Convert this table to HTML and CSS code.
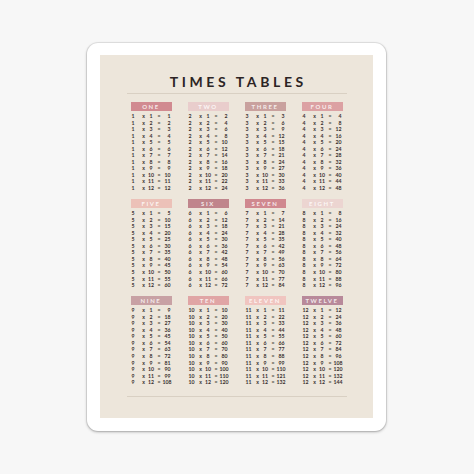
FILE: index.html
```html
<!DOCTYPE html>
<html>
<head>
<meta charset="utf-8">
<link rel="stylesheet" href="styles.css">
</head>
<body>
<div class="sticker">
  <div class="poster">
    <h1 class="title">TIMES TABLES</h1>
    <div class="rule"></div>
    <div class="grid" id="grid"></div>
    <div class="rule bottom"></div>
  </div>
</div>
<script src="script.js"></script>
</body>
</html>
```
FILE: styles.css
```css
html, body {
  margin: 0;
  padding: 0;
  background: #f7f7f7;
}
body {
  width: 474px;
  height: 474px;
  overflow: hidden;
  font-family: "Lato", "Inter", sans-serif;
}
.sticker {
  margin: 43px 0 0 87px;
  width: 299px;
  height: 388px;
  box-sizing: border-box;
  padding: 12px 13px 13px 13px;
  background: #ffffff;
  border-radius: 11px;
  box-shadow: 0 0 0 1px rgba(0,0,0,0.07), 0 1px 3px rgba(0,0,0,0.3);
}
.poster {
  width: 273px;
  height: 363px;
  background: #ede6db;
  display: flex;
  flex-direction: column;
  align-items: center;
}
.title {
  margin: 20px 0 0 0;
  font-size: 14px;
  line-height: 14px;
  font-weight: 700;
  letter-spacing: 3.6px;
  padding-left: 3.6px;
  color: #2c2424;
}
.rule {
  width: 220px;
  height: 1px;
  background: #d9d0c3;
  margin-top: 4px;
}
.rule.bottom {
  margin-top: 10px;
}
.grid {
  margin-top: 8px;
  display: grid;
  grid-template-columns: repeat(4, 41px);
  column-gap: 16px;
  row-gap: 7.5px;
}
.table {
  display: flex;
  flex-direction: column;
}
.head {
  height: 9px;
  line-height: 9px;
  font-size: 6px;
  font-weight: 700;
  letter-spacing: 1.6px;
  text-align: center;
  color: rgba(255,255,255,0.82);
  margin-bottom: 2px;
}
.row {
  display: grid;
  grid-template-columns: 9px 6px 9px 7px 1fr;
  height: 6.55px;
  line-height: 6.55px;
  font-size: 5.2px;
  font-weight: 700;
  color: #3a3030;
  padding: 0 1px;
}
.row span:nth-child(1) { text-align: left; }
.row span:nth-child(2) { text-align: center; }
.row span:nth-child(3) { text-align: center; }
.row span:nth-child(4) { text-align: center; }
.row span:nth-child(5) { text-align: right; }
.c1 { background: #d18a90; }
.c2 { background: #e9cdcc; }
.c3 { background: #c9a19e; }
.c4 { background: #dca1a3; }
.c5 { background: #ecc1b8; }
.c6 { background: #c0858c; }
.c7 { background: #d0888f; }
.c8 { background: #ecd5d1; }
.c9 { background: #c8a1a4; }
.c10 { background: #e0a5a5; }
.c11 { background: #f0c5c0; }
.c12 { background: #b8899a; }
```
FILE: script.js
```js
var names = ["ONE","TWO","THREE","FOUR","FIVE","SIX","SEVEN","EIGHT","NINE","TEN","ELEVEN","TWELVE"];
var grid = document.getElementById("grid");
for (var n = 1; n <= 12; n++) {
  var t = document.createElement("div");
  t.className = "table";
  var h = document.createElement("div");
  h.className = "head c" + n;
  h.textContent = names[n - 1];
  t.appendChild(h);
  for (var i = 1; i <= 12; i++) {
    var r = document.createElement("div");
    r.className = "row";
    var parts = [n, "x", i, "=", n * i];
    for (var k = 0; k < parts.length; k++) {
      var s = document.createElement("span");
      s.textContent = parts[k];
      r.appendChild(s);
    }
    t.appendChild(r);
  }
  grid.appendChild(t);
}
```
